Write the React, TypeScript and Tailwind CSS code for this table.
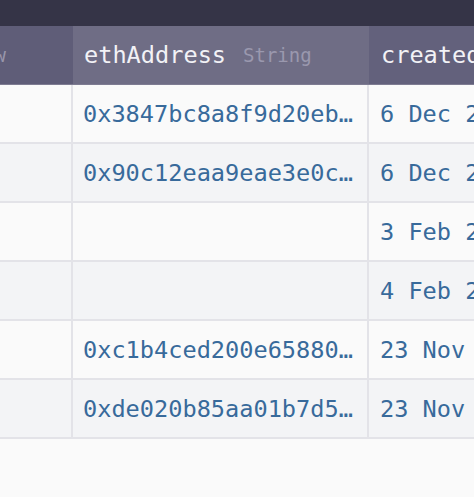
const rows = [
  { addr: '0x3847bc8a8f9d20eb4c6a1f2e0b9d7c53a18e44f2', date: '6 Dec 2017 14:32' },
  { addr: '0x90c12eaa9eae3e0c7b41d2a9f86e3b05c71d2a4e', date: '6 Dec 2017 15:07' },
  { addr: '', date: '3 Feb 2018 09:12' },
  { addr: '', date: '4 Feb 2018 11:48' },
  { addr: '0xc1b4ced200e65880a3d94f1b2c7e6a9d05f3b871', date: '23 Nov 2017 18:20' },
  { addr: '0xde020b85aa01b7d5e9c3f4a7b2d1806e5c9f3a12', date: '23 Nov 2017 19:41' },
]

const mono = "font-['DejaVu_Sans_Mono',monospace]"

export default function App() {
  return (
    <div className={`w-[474px] h-[497px] overflow-hidden bg-[#fafafa] ${mono}`}>
      {/* top bar */}
      <div className="h-[26px] bg-[#353447]" />

      <div className="ml-[-127px] w-[820px]">
        {/* header row */}
        <div className="flex h-[59px] border-b border-[#7e7c92] text-[#f2f2f6]">
          <div className="w-[200px] shrink-0 flex items-center pl-[12px] pt-[1px] bg-[#5f5d78] whitespace-nowrap overflow-hidden">
            <span className="text-[23.6px]">id</span>
            <span className="ml-[24px] text-[19px] text-[#9896ab]">Review</span>
          </div>
          <div className="w-[296px] shrink-0 flex items-center pl-[11px] pt-[1px] bg-[#6f6d85] whitespace-nowrap overflow-hidden">
            <span className="text-[23.6px]">ethAddress</span>
            <span className="ml-[17px] text-[19px] text-[#9a98ae]">String</span>
          </div>
          <div className="w-[320px] shrink-0 flex items-center pl-[12px] pt-[1px] bg-[#63617c] whitespace-nowrap overflow-hidden">
            <span className="text-[23.6px]">createdAt</span>
            <span className="ml-[17px] text-[19px] text-[#9896ab]">DateTime</span>
          </div>
        </div>

        {/* body */}
        {rows.map((r, i) => (
          <div
            key={i}
            className={`flex h-[59px] pt-[2px] border-b-2 border-[#e3e3e8] text-[23.6px] text-[#386a9b] ${
              i % 2 === 0 ? 'bg-[#fafafa]' : 'bg-[#f3f4f6]'
            }`}
          >
            <div className="w-[200px] shrink-0 border-r-2 border-[#e3e3e8] -mt-[2px]" />
            <div className="w-[296px] shrink-0 flex items-center px-[10px] border-r-2 border-[#e3e3e8] min-w-0 -mt-[2px] pt-[2px]">
              <span className="block truncate">{r.addr}</span>
            </div>
            <div className="w-[320px] shrink-0 flex items-center px-[11px] whitespace-nowrap overflow-hidden">
              {r.date}
            </div>
          </div>
        ))}
      </div>
    </div>
  )
}
